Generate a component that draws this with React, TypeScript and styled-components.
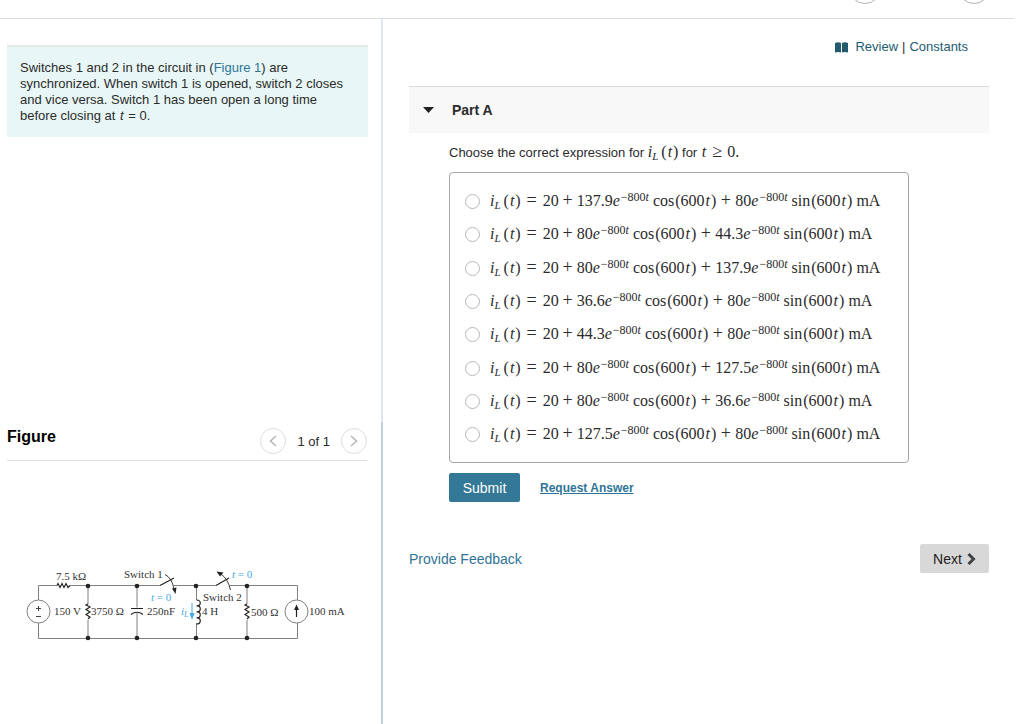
import React from "react";
import styled, { createGlobalStyle } from "styled-components";

const GlobalStyle = createGlobalStyle`
  * { box-sizing: border-box; }
  body {
    margin: 0;
    background: #fff;
    color: #2b2b2b;
    font: 13px/16px "Liberation Sans", Arial, sans-serif;
  }
`;

const Page = styled.div`
  min-height: 100vh;
  padding-right: 10px;
  display: flex;
  flex-direction: column;
`;

const TopBar = styled.header`
  height: 19px;
  border-bottom: 1px solid #dcdddf;
`;

const TopControls = styled.div`
  height: 4px;
  overflow: hidden;
  display: flex;
  justify-content: flex-end;
  align-items: flex-end;
  gap: 77px;
  padding-right: 24px;
`;

const TopButton = styled.button`
  flex: none;
  width: 32px;
  height: 32px;
  padding: 0;
  border: 1px solid #b4b4b4;
  border-radius: 50%;
  background: #fff;
`;

const Columns = styled.div`
  flex: 1;
  display: grid;
  grid-template-columns: minmax(0, 383fr) minmax(0, 631fr);
`;

const Side = styled.aside`
  display: flex;
  flex-direction: column;
`;

const ProblemPane = styled.div`
  min-height: 403px;
  padding: 26px 13px 0 7px;
  border-right: 2px solid #dde6f1;
`;

const Intro = styled.p`
  margin: 0;
  padding: 13px 12px 13px 13px;
  border-top: 2px solid #e3eae9;
  background: #e8f7f6;
`;

const Link = styled.a`
  color: #2f7496;
  text-decoration: none;
`;

const FigurePane = styled.section`
  flex: 1;
  padding: 6px 14px 0 7px;
  border-right: 2px solid #bfcee0;
`;

const FigureHeader = styled.div`
  display: flex;
  justify-content: space-between;
  height: 33px;
  border-bottom: 1px solid #dcdddf;
`;

const FigureTitle = styled.h2`
  margin: 0;
  font-size: 16px;
  line-height: 18px;
  color: #000;
`;

const Pager = styled.div`
  display: flex;
  align-items: flex-start;
  gap: 11px;
  line-height: 28px;
`;

const PagerButton = styled.button`
  display: grid;
  place-items: center;
  width: 26px;
  height: 26px;
  padding: 0;
  border: 1px solid #dedede;
  border-radius: 50%;
  background: #fff;
`;

const Circuit = styled.svg`
  display: block;
  width: 340px;
  max-width: 100%;
  margin: 99px 0 0 13px;
  font-family: "Liberation Serif", "Times New Roman", serif;
  font-size: 11px;
  fill: #333;
`;

const Main = styled.main`
  padding: 20px 25px 0 26px;
`;

const Tools = styled.nav`
  display: flex;
  justify-content: flex-end;
  align-items: center;
  gap: 4px;
  height: 16px;
  padding-right: 21px;
`;

const ToolLink = styled(Link)`
  display: flex;
  align-items: center;
  gap: 7px;
  color: #235a70;
`;

const PartHeader = styled.div`
  display: flex;
  align-items: center;
  gap: 18px;
  height: 47px;
  margin-top: 31px;
  padding-left: 14px;
  border-top: 1px solid #d9d9d9;
  background: #f8f8f8;
`;

const Toggle = styled.button`
  display: flex;
  padding: 0;
  border: 0;
  background: none;
`;

const PartTitle = styled.h3`
  margin: 0;
  font-size: 14px;
`;

const Question = styled.form`
  margin: 0 80px 0 40px;
`;

const Choices = styled.fieldset`
  min-width: 0;
  margin: 0;
  padding: 0;
  border: 0;
`;

const Prompt = styled.legend`
  padding: 9px 0 10px;
  line-height: 19px;
`;

const ChoiceBox = styled.div`
  padding: 11px 15px 12px;
  border: 1px solid #a6a6a6;
  border-radius: 4px;
`;

const Choice = styled.label`
  display: flex;
  align-items: center;
  gap: 10px;
  height: 33px;
  &:nth-child(3n) { height: 34px; }
`;

const Radio = styled.input`
  appearance: none;
  flex: none;
  width: 15px;
  height: 15px;
  margin: 2px 0 0;
  border: 1px solid #b8b8b8;
  border-radius: 50%;
  background: #fff;
  &:checked { border: 4px solid #337896; }
`;

const MathText = styled.span`
  font-family: "Liberation Serif", "Times New Roman", serif;
  font-size: 16px;
  line-height: 19px;
  white-space: nowrap;
`;

const Variable = styled.i`
  padding: 0 1px;
`;

const Base = styled.i`
  padding-right: 1px;
`;

const Fn = styled.span`
  padding-right: 1px;
`;

const Op = styled.span<{ $w: number }>`
  display: inline-block;
  width: ${(p) => p.$w}px;
  text-align: center;
  font-size: 18px;
  line-height: 16px;
`;

const Sub = styled.sub`
  margin-right: 3px;
  font-size: 11px;
  line-height: 0;
  vertical-align: -3px;
`;

const Sup = styled.sup`
  margin-right: 4px;
  font-size: 12px;
  line-height: 0;
  vertical-align: 5px;
`;

const Unit = styled.span`
  margin-left: 4px;
`;

const Actions = styled.div`
  display: flex;
  align-items: center;
  gap: 20px;
  margin-top: 10px;
`;

const Submit = styled.button`
  width: 71px;
  height: 29px;
  padding: 0;
  border: 0;
  border-radius: 2px;
  background: #337896;
  color: #fff;
  font: 14px "Liberation Sans", Arial, sans-serif;
`;

const RequestLink = styled(Link)`
  font-size: 12px;
  font-weight: bold;
  text-decoration: underline;
`;

const Footer = styled.div`
  display: flex;
  justify-content: space-between;
  align-items: center;
  margin-top: 42px;
  font-size: 14px;
`;

const Next = styled.button`
  display: flex;
  justify-content: center;
  align-items: center;
  gap: 5px;
  width: 69px;
  height: 29px;
  padding: 0;
  border: 0;
  border-radius: 2px;
  background: #d8d8d8;
  color: #222;
  font: 14px "Liberation Sans", Arial, sans-serif;
`;

const answers = [
  ["137.9", "80"],
  ["80", "44.3"],
  ["80", "137.9"],
  ["36.6", "80"],
  ["44.3", "80"],
  ["80", "127.5"],
  ["80", "36.6"],
  ["127.5", "80"],
];

function Current() {
  return (
    <>
      <i>i</i>
      <Sub><i>L</i></Sub>(<Variable>t</Variable>)
    </>
  );
}

function Decay() {
  return (
    <>
      <Base>e</Base>
      <Sup>−800<i>t</i></Sup>
    </>
  );
}

function Answer({ a, b }: { a: string; b: string }) {
  return (
    <MathText>
      <Current /><Op $w={22}>=</Op>20<Op $w={18}>+</Op>{a}<Decay />
      <Fn>cos</Fn>(600<Variable>t</Variable>)<Op $w={19}>+</Op>{b}<Decay />
      <Fn>sin</Fn>(600<Variable>t</Variable>)<Unit>mA</Unit>
    </MathText>
  );
}

function Chevron({ left }: { left?: boolean }) {
  return (
    <svg width="8" height="12" viewBox="0 0 8 12" fill="none" stroke="#b5b5b5" strokeWidth="1.5" aria-hidden="true">
      <path d={left ? "M7 1L1.5 6L7 11" : "M1 1L6.5 6L1 11"} />
    </svg>
  );
}

function CircuitDiagram() {
  const dots = [[68, 26], [117, 26], [176, 26], [227, 26], [68, 78], [117, 78], [176, 78], [227, 78]];
  return (
    <Circuit viewBox="0 0 340 90" role="img" aria-label="Switched circuit">
      <g fill="none" stroke="#808080" strokeWidth="1">
        <path d="M18.500 40V25.500H37M50 25.500H140M154 25.500H196M210 25.500H277.500V40M277.500 63V78.500H18.500V63" />
        <path d="M68 26V44M68 60V78M117 26V47.500M117 53V78M176.500 26V40M176.500 63V78M227 26V44M227 60V78" />
        <circle cx="18.500" cy="51.500" r="11.500" />
        <circle cx="276.500" cy="51.500" r="11.500" />
      </g>
      <g fill="none" stroke="#222" strokeWidth="1.200">
        <path d="M37 25.500l1 -2l2 4l2 -4l2 4l2 -4l2 4l2 -2" />
        <path d="M68 44l-2 1l4 2l-4 2.500l4 2.500l-4 2.500l4 2.500l-2 2" />
        <path d="M227 44l-2 1l4 2l-4 2.500l4 2.500l-4 2.500l4 2.500l-2 2" />
        <path d="M111 48.500H123M111 54.500Q117 50 123 54.500" />
        <path d="M176.500 40c5 0 5 6 0 6c5 -1 5 6 0 6c5 -1 5 6 0 6c5 -1 5 6 0 6" />
        <path d="M140 25.500L154 18M196 25.500L209 18" />
        <path d="M145 14.500Q152 18 154 29M210.500 30Q208 19 201 14" strokeWidth=".9" />
        <path d="M276.500 57V49" />
      </g>
      <g fill="#222">
        <path d="M152 28.500L156.500 27.500L155.500 34ZM196.500 11.500L203.500 12.500L200 16.500ZM274 50L276.500 44.500L279 50Z" />
        {dots.map(([x, y]) => <circle key={`${x}-${y}`} cx={x} cy={y} r="2.300" />)}
      </g>
      <path d="M16 48.500H21M18.500 46V51M16 56.500H21" stroke="#444" fill="none" />
      <text x="36" y="20">7.5 kΩ</text>
      <text x="104" y="18">Switch 1</text>
      <text x="183" y="41">Switch 2</text>
      <text x="34" y="55">150 V</text>
      <text x="71" y="55">3750 Ω</text>
      <text x="127" y="55">250nF</text>
      <text x="182" y="55">4 H</text>
      <text x="231" y="56">500 Ω</text>
      <text x="289" y="55">100 mA</text>
      <g fill="#45a9e6">
        <text x="131" y="41"><tspan fontStyle="italic">t</tspan> = 0</text>
        <text x="212" y="18"><tspan fontStyle="italic">t</tspan> = 0</text>
        <text x="161" y="55" fontStyle="italic">i<tspan fontSize="8" dy="2">L</tspan></text>
        <path d="M171.500 43H172.500V53H174.500L172 60L169.500 53H171.500Z" />
      </g>
    </Circuit>
  );
}

export default function App() {
  return (
    <Page>
      <GlobalStyle />
      <TopBar>
        <TopControls>
          <TopButton type="button" aria-label="Previous item" />
          <TopButton type="button" aria-label="Next item" />
        </TopControls>
      </TopBar>
      <Columns>
        <Side>
          <ProblemPane>
            <Intro>
              Switches 1 and 2 in the circuit in (<Link href="#figure">Figure 1</Link>) are synchronized. When switch 1 is
              opened, switch 2 closes and vice versa. Switch 1 has been open a long time before closing at{" "}
              <Variable>t</Variable> = 0.
            </Intro>
          </ProblemPane>
          <FigurePane id="figure">
            <FigureHeader>
              <FigureTitle>Figure</FigureTitle>
              <Pager>
                <PagerButton type="button" aria-label="Previous figure"><Chevron left /></PagerButton>
                <span>1 of 1</span>
                <PagerButton type="button" aria-label="Next figure"><Chevron /></PagerButton>
              </Pager>
            </FigureHeader>
            <CircuitDiagram />
          </FigurePane>
        </Side>
        <Main>
          <Tools>
            <ToolLink href="#review">
              <svg width="13" height="11" viewBox="0 0 13 11" fill="#235a70" aria-hidden="true">
                <path d="M0 1Q3 -.5 6 1V10.500Q3 9.500 0 10.500ZM7 1Q10 -.5 13 1V10.500Q10 9.500 7 10.500Z" />
              </svg>
              Review
            </ToolLink>
            <span>|</span>
            <ToolLink href="#constants">Constants</ToolLink>
          </Tools>
          <PartHeader>
            <Toggle type="button" aria-label="Collapse Part A">
              <svg width="11" height="6" viewBox="0 0 11 6" fill="#222" aria-hidden="true">
                <path d="M0 0H11L5.500 6Z" />
              </svg>
            </Toggle>
            <PartTitle>Part A</PartTitle>
          </PartHeader>
          <Question onSubmit={(e) => e.preventDefault()}>
            <Choices>
              <Prompt>
                Choose the correct expression for <MathText><Current /></MathText> for{" "}
                <MathText><Variable>t</Variable><Op $w={20}>≥</Op>0.</MathText>
              </Prompt>
              <ChoiceBox>
                {answers.map(([a, b]) => (
                  <Choice key={`${a}-${b}`}>
                    <Radio type="radio" name="answer" value={`${a}-${b}`} />
                    <Answer a={a} b={b} />
                  </Choice>
                ))}
              </ChoiceBox>
            </Choices>
            <Actions>
              <Submit type="submit">Submit</Submit>
              <RequestLink href="#answer">Request Answer</RequestLink>
            </Actions>
          </Question>
          <Footer>
            <Link href="#feedback">Provide Feedback</Link>
            <Next type="button">
              Next
              <svg width="9" height="12" viewBox="0 0 9 12" fill="none" stroke="#444" strokeWidth="3" aria-hidden="true">
                <path d="M1.500 1L6.500 6L1.500 11" />
              </svg>
            </Next>
          </Footer>
        </Main>
      </Columns>
    </Page>
  );
}
